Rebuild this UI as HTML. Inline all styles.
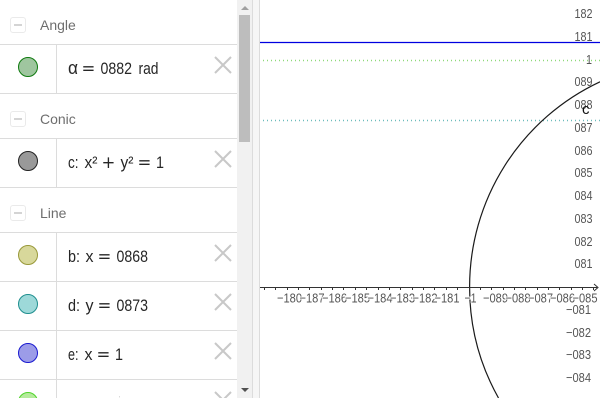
<!DOCTYPE html>
<html><head><meta charset="utf-8">
<style>
html,body{margin:0;padding:0;background:#fff;width:600px;height:400px;overflow:hidden}
#p{position:relative;width:600px;height:398px;overflow:hidden;background:#fff;font-family:"Liberation Sans",sans-serif}
.a{position:absolute}
.hl{position:absolute;left:0;width:237px;height:1px;background:#dcdcdc}
.vl{position:absolute;left:56px;width:1px;background:#dcdcdc}
.box{position:absolute;left:10px;width:14px;height:14px;border:1px solid #eaeaea;border-radius:3px}
.box:after{content:"";position:absolute;left:3px;top:6px;width:8px;height:2px;background:#d4d4d4}
.g{position:absolute;left:40px;font-size:14px;line-height:18px;color:#6e6e6e}
.dot{position:absolute;left:18px;width:18px;height:18px;border-radius:50%;border:1px solid}
.x{position:absolute;left:214px}
.o{font-family:"DejaVu Sans",sans-serif;font-size:16.500px}
</style></head><body><div id="p">
<div class="box" style="top:17px"></div><div class="g" style="top:16px">Angle</div>
<div class="hl" style="top:44px"></div><div class="vl" style="top:45px;height:48px"></div>
<div class="dot" style="top:57px;background:#9fc69f;border-color:#0f7a0f"></div>
<svg class="x" style="top:56px" width="18" height="18"><path d="M1 1L17 17M17 1L1 17" stroke="#c8c8c8" stroke-width="2" fill="none"/></svg>
<div class="hl" style="top:93px"></div>

<div class="box" style="top:111px"></div><div class="g" style="top:110px">Conic</div>
<div class="hl" style="top:138px"></div><div class="vl" style="top:139px;height:48px"></div>
<div class="dot" style="top:151px;background:#999;border-color:#222"></div>
<svg class="x" style="top:150px" width="18" height="18"><path d="M1 1L17 17M17 1L1 17" stroke="#c8c8c8" stroke-width="2" fill="none"/></svg>
<div class="hl" style="top:187px"></div>

<div class="box" style="top:205px"></div><div class="g" style="top:204px">Line</div>
<div class="hl" style="top:232px"></div><div class="vl" style="top:233px;height:165px"></div>
<div class="dot" style="top:245px;background:#d8d89b;border-color:#99993a"></div>
<svg class="x" style="top:244px" width="18" height="18"><path d="M1 1L17 17M17 1L1 17" stroke="#c8c8c8" stroke-width="2" fill="none"/></svg>
<div class="hl" style="top:281px"></div>
<div class="dot" style="top:294px;background:#9dd9d9;border-color:#1f8f8f"></div>
<svg class="x" style="top:293px" width="18" height="18"><path d="M1 1L17 17M17 1L1 17" stroke="#c8c8c8" stroke-width="2" fill="none"/></svg>
<div class="hl" style="top:330px"></div>
<div class="dot" style="top:343px;background:#9c9ce8;border-color:#1a1ad0"></div>
<svg class="x" style="top:342px" width="18" height="18"><path d="M1 1L17 17M17 1L1 17" stroke="#c8c8c8" stroke-width="2" fill="none"/></svg>
<div class="hl" style="top:379px"></div>
<svg class="a" style="left:0;top:390px" width="60" height="8"><circle cx="28" cy="12" r="9.500" fill="#b5eb9c" stroke="#4fd42a" stroke-width="1"/></svg>
<svg class="x" style="top:391px" width="18" height="7"><path d="M1 1L17 17M17 1L1 17" stroke="#c8c8c8" stroke-width="2" fill="none"/></svg>

<svg class="a" style="left:0;top:0" width="237" height="398" font-family="Liberation Sans, sans-serif" font-size="17" fill="#262626">
<text x="68" y="74" font-size="18" textLength="10" lengthAdjust="spacingAndGlyphs">α</text>
<text class="o" x="81.500" y="74">=</text>
<text x="100.500" y="74" textLength="31.500" lengthAdjust="spacingAndGlyphs">0882</text>
<text x="138.500" y="74" textLength="20" lengthAdjust="spacingAndGlyphs">rad</text>

<text x="68" y="168" textLength="10.500" lengthAdjust="spacingAndGlyphs">c:</text>
<text x="84.500" y="168" textLength="13" lengthAdjust="spacingAndGlyphs">x²</text>
<text class="o" x="101.500" y="168">+</text>
<text x="120.500" y="168" textLength="13" lengthAdjust="spacingAndGlyphs">y²</text>
<text class="o" x="137.500" y="168">=</text>
<text x="156" y="168" textLength="8" lengthAdjust="spacingAndGlyphs">1</text>

<text x="68" y="262" textLength="12" lengthAdjust="spacingAndGlyphs">b:</text>
<text x="85.500" y="262" textLength="8" lengthAdjust="spacingAndGlyphs">x</text>
<text class="o" x="97.500" y="262">=</text>
<text x="116.500" y="262" textLength="31.500" lengthAdjust="spacingAndGlyphs">0868</text>

<text x="68" y="311" textLength="12" lengthAdjust="spacingAndGlyphs">d:</text>
<text x="85.500" y="311" textLength="8" lengthAdjust="spacingAndGlyphs">y</text>
<text class="o" x="97.500" y="311">=</text>
<text x="116.500" y="311" textLength="31.500" lengthAdjust="spacingAndGlyphs">0873</text>

<text x="68" y="360" textLength="10.500" lengthAdjust="spacingAndGlyphs">e:</text>
<text x="84.500" y="360" textLength="8" lengthAdjust="spacingAndGlyphs">x</text>
<text class="o" x="96.500" y="360">=</text>
<text x="115" y="360" textLength="8" lengthAdjust="spacingAndGlyphs">1</text>

<text x="119" y="399" font-size="4">'</text>
</svg>

<div class="a" style="left:237px;top:0;width:15px;height:398px;background:#f1f1f1"></div>
<div class="a" style="left:239px;top:15px;width:11px;height:127px;background:#bdbdbd"></div>
<div class="a" style="left:241px;top:6px;width:0;height:0;border-left:4px solid transparent;border-right:4px solid transparent;border-bottom:4px solid #a0a0a0"></div>
<div class="a" style="left:241px;top:388px;width:0;height:0;border-left:4px solid transparent;border-right:4px solid transparent;border-top:4px solid #505050"></div>
<div class="a" style="left:252px;top:0;width:1px;height:398px;background:#dcdcdc"></div>
<div class="a" style="left:253px;top:0;width:6px;height:398px;background:#f6f6f6"></div>
<div class="a" style="left:259px;top:0;width:1px;height:398px;background:#dcdcdc"></div>

<svg class="a" style="left:260px;top:0" width="340" height="398" viewBox="260 0 340 398">
<path d="M260 42.500H600" stroke="#0000e0" stroke-width="1.300" fill="none"/>
<path d="M263 60.500H600" stroke="#8fd97a" stroke-width="1.500" stroke-dasharray="1 3" fill="none"/>
<path d="M263 120.500H600" stroke="#6cbcbc" stroke-width="1.500" stroke-dasharray="1 3" fill="none"/>
<path d="M469.600 287A226.400 226.400 0 0 1 600 81.800M469.600 287A226.400 226.400 0 0 0 498.500 398" fill="none" stroke="#1a1a1a" stroke-width="1.200"/>
<path d="M260 287.500H597" stroke="#333" stroke-width="1" fill="none"/>
<path d="M594 284L598 287.500L594 291" stroke="#333" stroke-width="1" fill="none"/>
<path d="M264.500 287V290M275.500 287V290M287.500 287V290M298.500 287V290M309.500 287V290M321.500 287V290M332.500 287V290M343.500 287V290M355.500 287V290M366.500 287V290M378.500 287V290M389.500 287V290M400.500 287V290M412.500 287V290M423.500 287V290M434.500 287V290M446.500 287V290M457.500 287V290M469.500 287V290M480.500 287V290M491.500 287V290M503.500 287V290M514.500 287V290M525.500 287V290M537.500 287V290M548.500 287V290M559.500 287V290M571.500 287V290M582.500 287V290M593.500 287V290" stroke="#333" stroke-width="1" fill="none"/>
<g font-family="Liberation Sans, sans-serif" font-size="13" fill="#555" stroke="#fff" stroke-width="2" paint-order="stroke" stroke-linejoin="round">
<text x="277" y="302.500" textLength="25" lengthAdjust="spacingAndGlyphs">−180</text>
<text x="299.500" y="302.500" textLength="25" lengthAdjust="spacingAndGlyphs">−187</text>
<text x="322" y="302.500" textLength="25" lengthAdjust="spacingAndGlyphs">−186</text>
<text x="345" y="302.500" textLength="25" lengthAdjust="spacingAndGlyphs">−185</text>
<text x="367.500" y="302.500" textLength="25" lengthAdjust="spacingAndGlyphs">−184</text>
<text x="390" y="302.500" textLength="25" lengthAdjust="spacingAndGlyphs">−183</text>
<text x="412.500" y="302.500" textLength="25" lengthAdjust="spacingAndGlyphs">−182</text>
<text x="434.500" y="302.500" textLength="25" lengthAdjust="spacingAndGlyphs">−181</text>
<text x="464.500" y="302.500" textLength="12" lengthAdjust="spacingAndGlyphs">−1</text>
<text x="483" y="302.500" textLength="25" lengthAdjust="spacingAndGlyphs">−089</text>
<text x="505.500" y="302.500" textLength="25" lengthAdjust="spacingAndGlyphs">−088</text>
<text x="528" y="302.500" textLength="25" lengthAdjust="spacingAndGlyphs">−087</text>
<text x="550" y="302.500" textLength="25" lengthAdjust="spacingAndGlyphs">−086</text>
<text x="572.500" y="302.500" textLength="25" lengthAdjust="spacingAndGlyphs">−085</text>
</g>
<g font-family="Liberation Sans, sans-serif" font-size="13" fill="#555">
<text x="574.500" y="18" textLength="18" lengthAdjust="spacingAndGlyphs">182</text>
<text x="574.500" y="41" textLength="18" lengthAdjust="spacingAndGlyphs">181</text>
<text x="586" y="64" textLength="6" lengthAdjust="spacingAndGlyphs">1</text>
<text x="574.500" y="86" textLength="18" lengthAdjust="spacingAndGlyphs">089</text>
<text x="574.500" y="109" textLength="18" lengthAdjust="spacingAndGlyphs">088</text>
<text x="574.500" y="132" textLength="18" lengthAdjust="spacingAndGlyphs">087</text>
<text x="574.500" y="155" textLength="18" lengthAdjust="spacingAndGlyphs">086</text>
<text x="574.500" y="177" textLength="18" lengthAdjust="spacingAndGlyphs">085</text>
<text x="574.500" y="200" textLength="18" lengthAdjust="spacingAndGlyphs">084</text>
<text x="574.500" y="223" textLength="18" lengthAdjust="spacingAndGlyphs">083</text>
<text x="574.500" y="246" textLength="18" lengthAdjust="spacingAndGlyphs">082</text>
<text x="574.500" y="268" textLength="18" lengthAdjust="spacingAndGlyphs">081</text>
<text x="566" y="314" textLength="25" lengthAdjust="spacingAndGlyphs">−081</text>
<text x="566" y="337" textLength="25" lengthAdjust="spacingAndGlyphs">−082</text>
<text x="566" y="359" textLength="25" lengthAdjust="spacingAndGlyphs">−083</text>
<text x="566" y="382" textLength="25" lengthAdjust="spacingAndGlyphs">−084</text>
</g>
<text x="582" y="114" font-family="Liberation Sans, sans-serif" font-size="15" fill="#111">c</text>
</svg>
</div></body></html>
